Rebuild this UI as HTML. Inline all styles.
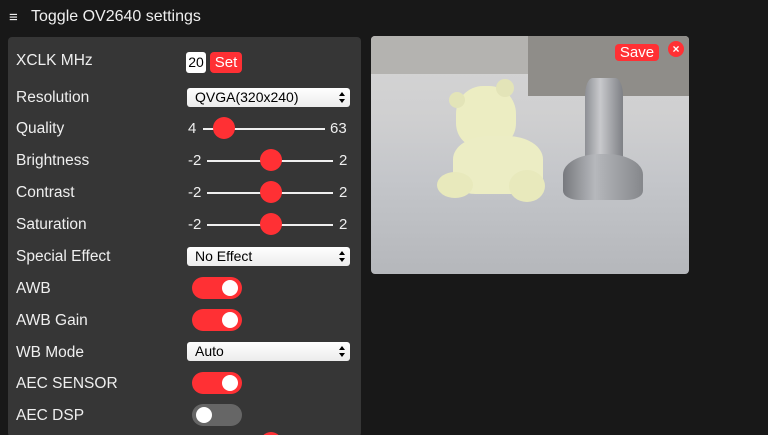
<!DOCTYPE html>
<html><head><style>
*{margin:0;padding:0;box-sizing:border-box}
html,body{width:768px;height:435px;overflow:hidden}
body{background:#181818;font-family:"Liberation Sans",sans-serif;color:#efefef;position:relative}
.a{position:absolute}
.lbl{position:absolute;left:16px;font-size:15.5px;line-height:18px}
.sel{position:absolute;left:187px;width:163px;height:19px;background:linear-gradient(#fff,#ececec);border-radius:3px;color:#000;font-size:14px;line-height:19px;padding-left:8px}
.sel:after{content:"";position:absolute;right:5px;top:4px;border:3px solid transparent;border-bottom:4px solid #000;border-top:0}
.sel:before{content:"";position:absolute;right:5px;top:11px;border:3px solid transparent;border-top:4px solid #000;border-bottom:0}
.tg{position:absolute;left:192px;width:50px;height:22px;border-radius:11px;background:#ff3034}
.tg i{position:absolute;right:4px;top:3px;width:16px;height:16px;border-radius:50%;background:#fff}
.tg.off{background:#666}.tg.off i{right:auto;left:4px}
.num{position:absolute;font-size:15px;line-height:18px}
.tr{position:absolute;height:2px;background:#efefef}
.th{position:absolute;width:22px;height:22px;border-radius:50%;background:#ff3034}
</style></head><body>
<div class="a" style="left:9px;top:9px;font-size:15px">&#8801;</div>
<div class="a" style="left:31px;top:8px;font-size:16px">Toggle OV2640 settings</div>
<div class="a" style="left:8px;top:37px;width:353px;height:400px;background:#363636;border-radius:4px"></div>

<div class="lbl" style="top:52px">XCLK MHz</div>
<div class="a" style="left:186px;top:52px;width:20px;height:21px;background:#fff;border-radius:3px;color:#000;font-size:14px;line-height:21px;text-align:center">20</div>
<div class="a" style="left:210px;top:52px;width:32px;height:21px;background:#ff3034;border-radius:4px;color:#fff;font-size:15px;line-height:21px;text-align:center">Set</div>

<div class="lbl" style="top:89px">Resolution</div>
<div class="sel" style="top:88px">QVGA(320x240)</div>

<div class="lbl" style="top:120px">Quality</div>
<div class="num" style="left:188px;top:120px">4</div>
<div class="tr" style="left:203px;top:128px;width:122px"></div>
<div class="th" style="left:213px;top:117px"></div>
<div class="num" style="left:330px;top:120px">63</div>

<div class="lbl" style="top:152px">Brightness</div>
<div class="num" style="left:188px;top:152px">-2</div><div class="tr" style="left:207px;top:160px;width:126px"></div><div class="th" style="left:260px;top:149px"></div><div class="num" style="left:339px;top:152px">2</div>

<div class="lbl" style="top:184px">Contrast</div>
<div class="num" style="left:188px;top:184px">-2</div><div class="tr" style="left:207px;top:192px;width:126px"></div><div class="th" style="left:260px;top:181px"></div><div class="num" style="left:339px;top:184px">2</div>

<div class="lbl" style="top:216px">Saturation</div>
<div class="num" style="left:188px;top:216px">-2</div><div class="tr" style="left:207px;top:224px;width:126px"></div><div class="th" style="left:260px;top:213px"></div><div class="num" style="left:339px;top:216px">2</div>

<div class="lbl" style="top:248px">Special Effect</div>
<div class="sel" style="top:247px">No Effect</div>

<div class="lbl" style="top:280px">AWB</div><div class="tg" style="top:277px"><i></i></div>
<div class="lbl" style="top:312px">AWB Gain</div><div class="tg" style="top:309px"><i></i></div>
<div class="lbl" style="top:344px">WB Mode</div>
<div class="sel" style="top:342px">Auto</div>
<div class="lbl" style="top:375px">AEC SENSOR</div><div class="tg" style="top:372px"><i></i></div>
<div class="lbl" style="top:407px">AEC DSP</div><div class="tg off" style="top:404px"><i></i></div>
<div class="th" style="left:260px;top:432px"></div>

<div class="a" style="left:371px;top:36px;width:318px;height:238px;border-radius:4px;overflow:hidden;background:linear-gradient(180deg,#d6d6d6 0%,#cfcfd0 35%,#c4c6ca 60%,#b5b7bb 100%)">
<div class="a" style="left:0;top:0;width:157px;height:38px;background:#b4b3b0"></div>
<div class="a" style="left:157px;top:0;width:161px;height:60px;background:#8f8d89"></div>
<div class="a" style="left:85px;top:50px;width:60px;height:62px;border-radius:45% 45% 40% 40%;background:#ecedc2"></div>
<div class="a" style="left:78px;top:56px;width:16px;height:16px;border-radius:50%;background:#e3e4b8"></div>
<div class="a" style="left:125px;top:43px;width:18px;height:18px;border-radius:50%;background:#e3e4b8"></div>
<div class="a" style="left:82px;top:100px;width:90px;height:58px;border-radius:40% 40% 25% 25%;background:#ecedc4"></div>
<div class="a" style="left:66px;top:136px;width:36px;height:26px;border-radius:50%;background:#e8e9bc"></div>
<div class="a" style="left:138px;top:134px;width:36px;height:32px;border-radius:50%;background:#e8e9bc"></div>
<div class="a" style="left:214px;top:42px;width:38px;height:90px;border-radius:20% 20% 10% 10%;background:linear-gradient(90deg,#8d8f94,#c8c9cc 40%,#7e8085)"></div>
<div class="a" style="left:192px;top:118px;width:80px;height:46px;border-radius:45% 45% 20% 20%;background:linear-gradient(90deg,#77797e,#b6b8bc 40%,#85878b)"></div>
<div class="a" style="left:244px;top:8px;width:44px;height:17px;background:#ff3034;border-radius:4px;color:#fff;font-size:15px;line-height:17px;text-align:center">Save</div>
<div class="a" style="left:297px;top:5px;width:16px;height:16px;background:#ff3034;border-radius:50%;color:#fff;font-size:12px;font-weight:bold;line-height:16px;text-align:center">×</div>
</div>
</body></html>
